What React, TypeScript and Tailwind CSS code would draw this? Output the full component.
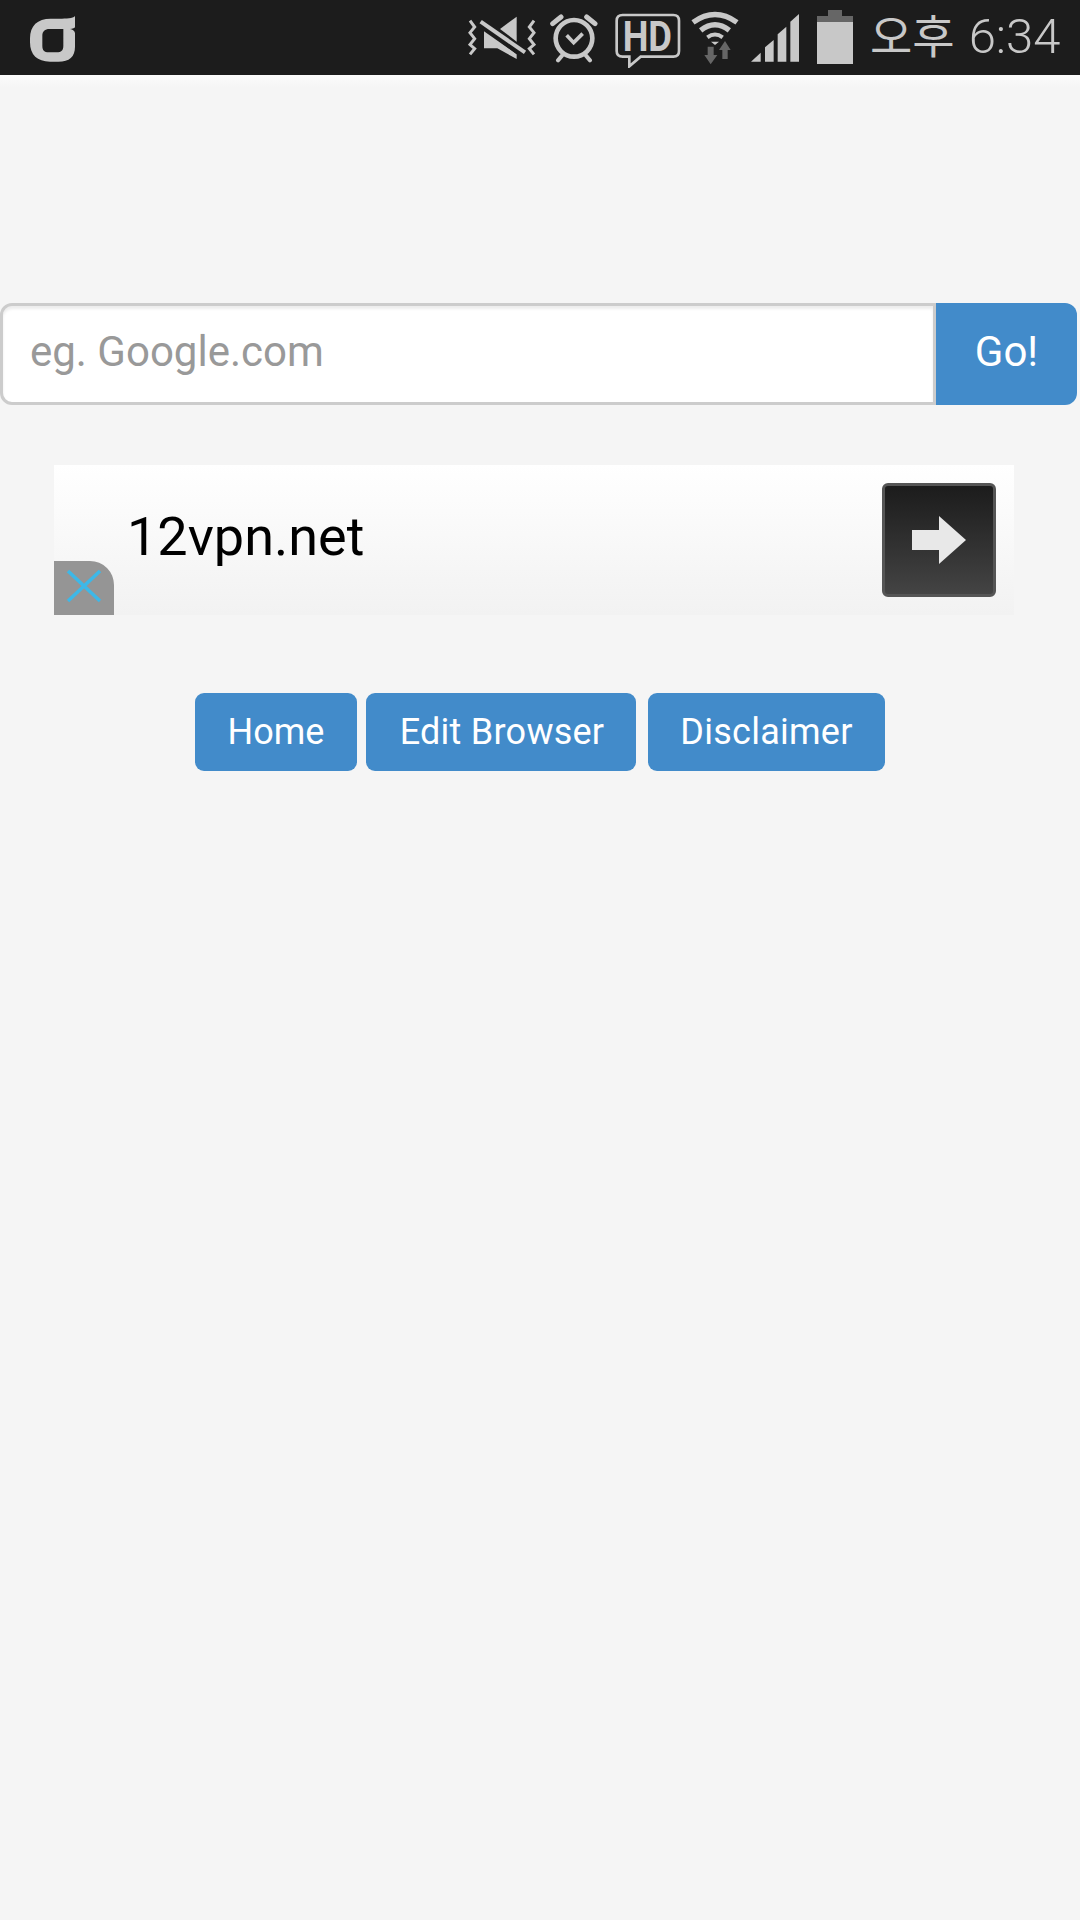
import React from 'react'

const StatusBar = () => (
  <div className="flex h-[75px] items-start bg-[#1c1c1c] text-[#c8c8c8] [&>*]:shrink-0">
    {/* carrier logo */}
    <svg className="ml-[30px] mt-[16px]" width="45" height="46" viewBox="30 33 135 138">
      <path
        fill="#c8c8c8"
        fillRule="evenodd"
        d="M165 33 C158 41 140 41 118 41 H92 C52 41 30 62 30 100 V112 C30 150 52 170 90 170 H115 C148 170 165 155 165 125 V85 C165 78 158 73 150 72 C158 71 165 70 165 66 Z M88 72 H130 V122 C130 136 124 142 110 142 H86 C73 142 67 136 67 122 V92 C67 79 75 72 88 72 Z"
      />
    </svg>

    {/* vibrate / mute */}
    <svg className="ml-[391px] mt-[15px]" width="72" height="45" viewBox="18 30 216 135">
      <g fill="none" stroke="#c8c8c8" strokeWidth="9">
        <polyline points="30,47 44,66 30,83 44,101 30,119 44,131 30,148" />
        <polyline points="222,47 208,66 222,83 208,101 222,119 208,131 222,148" />
      </g>
      <polygon fill="#c8c8c8" points="72,75 72,130 112,130 170,162 170,148 100,95" />
      <polygon fill="#c8c8c8" points="120,72 170,35 170,110" />
      <line x1="62" y1="50" x2="195" y2="142" stroke="#c8c8c8" strokeWidth="12" />
      <line x1="60" y1="66" x2="180" y2="150" stroke="#1c1c1c" strokeWidth="7" />
    </svg>

    {/* alarm */}
    <svg className="ml-[12px] mt-[14px]" width="48" height="49" viewBox="270 27 144 147">
      <g fill="none" stroke="#c8c8c8" strokeLinecap="round">
        <circle cx="342" cy="100" r="55" strokeWidth="14" />
        <line x1="278" y1="56" x2="303" y2="36" strokeWidth="15" />
        <line x1="380" y1="36" x2="405" y2="56" strokeWidth="15" />
        <line x1="294" y1="166" x2="306" y2="152" strokeWidth="12" />
        <line x1="390" y1="166" x2="378" y2="152" strokeWidth="12" />
        <polyline points="320,91 341,113 368,86" strokeWidth="11" strokeLinecap="butt" />
      </g>
    </svg>

    {/* hd voice */}
    <svg className="ml-[17px] mt-[9px]" width="66" height="59" viewBox="15 12 198 177">
      <path
        fill="none"
        stroke="#c8c8c8"
        strokeWidth="8"
        d="M38 30 H190 Q207 30 207 47 V138 Q207 155 190 155 H92 L58 184 V155 H38 Q20 155 20 138 V47 Q20 30 38 30 Z"
      />
      <text
        x="38"
        y="138"
        fill="#c8c8c8"
        fontFamily="Roboto, sans-serif"
        fontWeight="700"
        fontSize="126"
        textLength="148"
        lengthAdjust="spacingAndGlyphs"
      >
        HD
      </text>
    </svg>

    {/* wifi */}
    <svg className="ml-[9px] mt-[10px]" width="50" height="55" viewBox="240 15 150 165">
      <g fill="none" stroke="#c8c8c8" strokeWidth="16">
        <path d="M249 52 Q315 5 381 52" />
        <path d="M272 76 Q315 42 358 76" />
        <path d="M292 97 Q315 80 338 97" strokeWidth="12" />
      </g>
      <polygon fill="#c8c8c8" points="303,110 327,110 315,120" />
      <polygon fill="#666666" points="293,125 311,125 311,150 322,150 302,178 283,150 293,150" />
      <polygon fill="#666666" points="345,108 362,135 353,135 353,162 337,162 337,135 327,135" />
    </svg>

    {/* signal */}
    <svg className="ml-[11px] mt-[14px]" width="48" height="48" viewBox="18 27 144 144">
      <g fill="#c8c8c8">
        <polygon points="18,170 47,143 47,170" />
        <polygon points="60,127 86,105 86,170 60,170" />
        <polygon points="98,88 124,65 124,170 98,170" />
        <polygon points="136,50 162,27 162,170 136,170" />
      </g>
    </svg>

    {/* battery */}
    <svg className="ml-[18px] mt-[10px]" width="36" height="54" viewBox="216 15 108 162">
      <rect x="249" y="15" width="42" height="18" fill="#666666" />
      <rect x="216" y="33" width="108" height="18" fill="#666666" />
      <rect x="216" y="51" width="108" height="126" fill="#c8c8c8" />
    </svg>

    <span className="ml-[17px] mt-[9px] whitespace-nowrap font-['Roboto','Noto_Sans_CJK_KR',sans-serif] text-[46px] font-normal leading-[56px]">
      오후
    </span>
    <span className="ml-[14px] mt-[9px] whitespace-nowrap font-['Roboto',sans-serif] text-[49px] font-light leading-[56px]">
      6:34
    </span>
  </div>
)

const NavButton = ({ label, className }: { label: string; className: string }) => (
  <a className={`flex h-[78px] items-center justify-center rounded-[9px] bg-[#428bca] text-[36px] text-white ${className}`}>
    {label}
  </a>
)

const App = () => {
  return (
    <div className="min-h-[1920px] bg-[#f5f5f5] font-['Roboto',sans-serif]">
      <StatusBar />
      <div className="h-[12px] bg-gradient-to-b from-[#fbfbfb] to-[#f5f5f5]" />

      <div className="mt-[216px] flex h-[102px] w-[1077px]">
        <input
          placeholder="eg. Google.com"
          className="h-full min-w-0 flex-1 rounded-l-[12px] border-[3px] border-[#cccccc] bg-white px-[27px] pb-[5px] text-[42px] shadow-[inset_0_3px_3px_rgba(0,0,0,0.075)] outline-none placeholder:text-[#999999]"
        />
        <button className="w-[141px] rounded-r-[12px] bg-[#428bca] pb-[5px] text-[42px] text-white">Go!</button>
      </div>

      <div className="relative ml-[54px] mt-[60px] flex h-[150px] w-[960px] items-center justify-between bg-gradient-to-b from-white to-[#f2f2f2] pl-[73px] pr-[18px]">
        <span className="-mt-[8px] text-[54px] text-black">12vpn.net</span>
        <div className="flex h-[114px] w-[114px] items-center justify-center rounded-[6px] border-[3px] border-[#555555] bg-gradient-to-b from-[#1c1c1c] to-[#444444]">
          <svg width="54" height="48" viewBox="0 0 54 48">
            <polygon fill="#e8e8e8" points="0,14 27,14 27,0 54,24 27,48 27,34 0,34" />
          </svg>
        </div>
        <div className="absolute bottom-0 left-0 h-[54px] w-[60px] rounded-tr-[24px] bg-[#959595]">
          <svg width="60" height="54" viewBox="0 0 60 54">
            <path d="M14 10 L46 40 M46 10 L14 40" stroke="#3db8e8" strokeWidth="3.5" fill="none" />
          </svg>
        </div>
      </div>

      <div className="mt-[78px] flex justify-center">
        <NavButton label="Home" className="w-[162px]" />
        <NavButton label="Edit Browser" className="ml-[9px] w-[270px] pl-[2px] tracking-[0.25px]" />
        <NavButton label="Disclaimer" className="ml-[12px] w-[237px] tracking-[0.25px]" />
      </div>
    </div>
  )
}

export default App
